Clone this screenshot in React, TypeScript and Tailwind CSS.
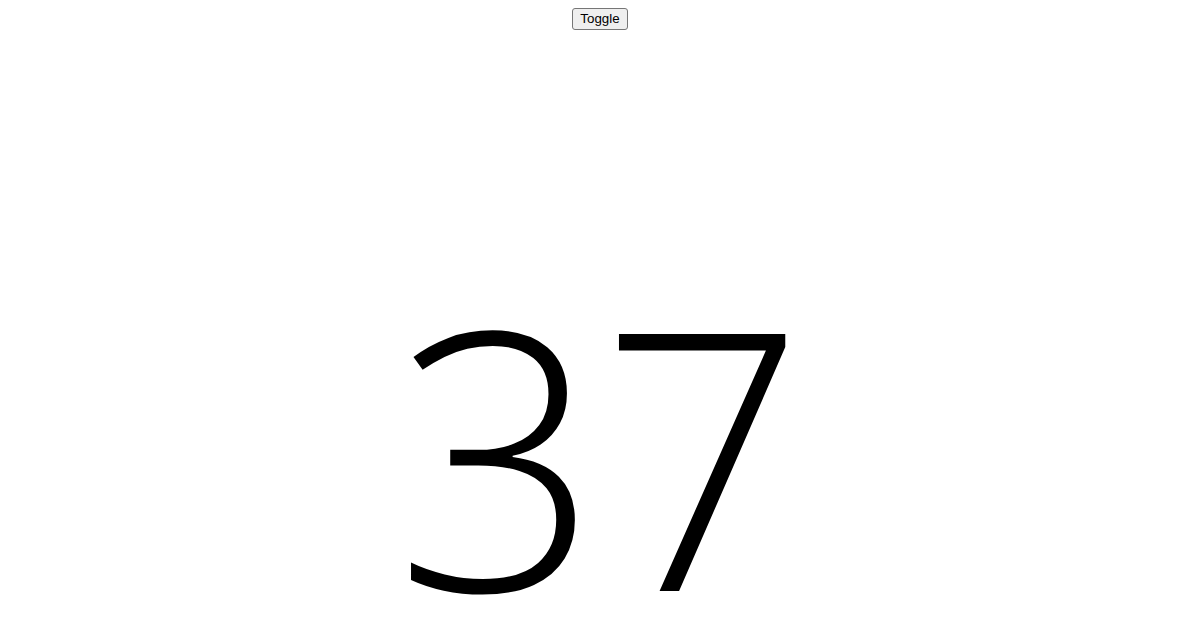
import React, { useState } from "react";

export default function App() {
  const [big, setBig] = useState(true);
  return (
    <div className="h-[630px] overflow-hidden bg-white text-center text-black">
      <div className="flex justify-center pt-2">
        <button
          onClick={() => setBig(!big)}
          className="h-[22px] rounded-[3px] border border-[#767676] bg-[#efefef] px-[7px] font-['Liberation_Sans',Arial,sans-serif] text-[13.333px] leading-[18px] text-black"
        >
          Toggle
        </button>
      </div>
      <div className="mt-[268px] font-['Open_Sans',sans-serif] text-[360px] font-light leading-[306px]">
        37
      </div>
    </div>
  );
}
